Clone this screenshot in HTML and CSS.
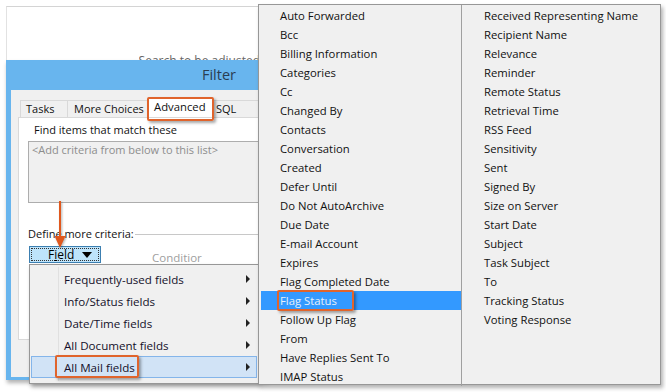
FILE: index.html
```html
<!DOCTYPE html>
<html>
<head>
<meta charset="utf-8">
<link rel="stylesheet" href="styles.css">
</head>
<body>
<div class="stage">
  <div class="bgwin"><div class="bgclip"><span class="bgtext">Search to be adjusted</span></div></div>
  <div class="dialog">
    <div class="titlebar"><span class="title">Filter</span></div>
    <div class="panel">
      <div class="tabs">
        <div class="tab tab-tasks">Tasks</div>
        <div class="tab tab-more">More Choices</div>
        <div class="tab tab-adv">Advanced</div>
        <div class="tab tab-sql">SQL</div>
      </div>
      <div class="content">
        <div class="find">Find items that match these</div>
        <div class="criteria">&lt;Add criteria from below to this list&gt;</div>
        <div class="define"><span>Define more criteria:</span><span class="rule"></span></div>
        <div class="fieldrow">
          <div class="fieldbtn"><span class="focus"><span class="flabel">F<u>i</u>eld</span><span class="tri"></span></span></div>
          <span class="cond">Conditior</span>
        </div>
      </div>
    </div>
  </div>

  <div class="menu">
    <div class="mi"><span>Frequently-used fields</span><span class="arr"></span></div>
    <div class="mi"><span>Info/Status fields</span><span class="arr"></span></div>
    <div class="mi"><span>Date/Time fields</span><span class="arr"></span></div>
    <div class="mi"><span>All Document fields</span><span class="arr"></span></div>
    <div class="mi mi-hl"><span>All Mail fields</span><span class="arr"></span></div>
  </div>

  <div class="submenu">
    <div class="col col1">
      <div class="si">Auto Forwarded</div>
      <div class="si">Bcc</div>
      <div class="si">Billing Information</div>
      <div class="si">Categories</div>
      <div class="si">Cc</div>
      <div class="si">Changed By</div>
      <div class="si">Contacts</div>
      <div class="si">Conversation</div>
      <div class="si">Created</div>
      <div class="si">Defer Until</div>
      <div class="si">Do Not AutoArchive</div>
      <div class="si">Due Date</div>
      <div class="si">E-mail Account</div>
      <div class="si">Expires</div>
      <div class="si">Flag Completed Date</div>
      <div class="si si-hl">Flag Status</div>
      <div class="si">Follow Up Flag</div>
      <div class="si">From</div>
      <div class="si">Have Replies Sent To</div>
      <div class="si">IMAP Status</div>
    </div>
    <div class="col col2">
      <div class="si">Received Representing Name</div>
      <div class="si">Recipient Name</div>
      <div class="si">Relevance</div>
      <div class="si">Reminder</div>
      <div class="si">Remote Status</div>
      <div class="si">Retrieval Time</div>
      <div class="si">RSS Feed</div>
      <div class="si">Sensitivity</div>
      <div class="si">Sent</div>
      <div class="si">Signed By</div>
      <div class="si">Size on Server</div>
      <div class="si">Start Date</div>
      <div class="si">Subject</div>
      <div class="si">Task Subject</div>
      <div class="si">To</div>
      <div class="si">Tracking Status</div>
      <div class="si">Voting Response</div>
    </div>
  </div>

  <div class="mark mark-adv"></div>
  <div class="mark mark-mail"></div>
  <div class="mark mark-flag"></div>

  <svg class="arrow" width="20" height="52" viewBox="0 0 20 52">
    <line x1="8" y1="1" x2="8" y2="38" stroke="#e0581e" stroke-width="2"/>
    <polygon points="2.5,36 13.5,36 8,48" fill="#e0581e"/>
  </svg>
</div>
</body>
</html>
```

FILE: styles.css
```css
* { box-sizing: border-box; }
html, body { margin: 0; padding: 0; background: #fff; }
body { font-family: "Open Sans", "Noto Sans", sans-serif; color: #000; }

.stage {
  position: relative;
  width: 666px;
  height: 392px;
  overflow: hidden;
  background: #fff;
  padding: 6px 0 0 6px;
}

.bgwin {
  width: 260px;
  height: 54px;
  background: #fff;
  border-top: 1px solid #d4d4d4;
  border-left: 1px solid #e2e2e2;
  display: flex;
  justify-content: flex-end;
  align-items: flex-end;
}
.bgclip {
  height: 5px;
  overflow: hidden;
  margin-right: 6px;
}
.bgtext {
  display: block;
  margin-top: 3px;
  font-size: 12px;
  line-height: 5px;
  color: #666;
  white-space: nowrap;
}

.dialog {
  width: 262px;
  height: 320px;
  background: #68b5ee;
  padding: 0 0 3px 5px;
  box-shadow: 1px 3px 4px rgba(0,0,0,0.3);
  display: flex;
  flex-direction: column;
}
.titlebar {
  height: 30px;
  display: flex;
  align-items: center;
  justify-content: flex-end;
  padding-right: 32px;
}
.title {
  font-size: 14.5px;
  line-height: 18px;
  color: #2a3d52;
}
.panel {
  flex: 1;
  background: #f0f0f0;
  padding: 10px 0 0 9px;
}

.tabs {
  display: flex;
  align-items: flex-end;
  height: 17px;
  font-size: 11px;
}
.tab {
  height: 17px;
  line-height: 16px;
  border: 1px solid #d9d9d9;
  border-bottom: none;
  background: #f0f0f0;
  padding-left: 5px;
  color: #111;
}
.tab + .tab { border-left: none; }
.tab-tasks { width: 48px; }
.tab-more { width: 80px; padding-left: 6px; }
.tab-adv {
  width: 65px;
  height: 20px;
  line-height: 17px;
  background: #fff;
  padding-left: 6px;
  border-left: 1px solid #d9d9d9;
  border-right: 1px solid #d9d9d9;
  font-size: 11.3px;
}
.tab-sql { width: 52px; padding-left: 3px; border-left: none; }

.content {
  margin-left: -2px;
  width: 260px;
  height: 223px;
  background: #fff;
  border: 1px solid #d9d9d9;
  padding: 4px 0 0 9px;
  font-size: 11px;
}
.find {
  line-height: 16px;
  padding-left: 6px;
  color: #111;
}
.criteria {
  margin-top: 3px;
  width: 250px;
  height: 62px;
  background: #f0f0f0;
  border: 1px solid #adadad;
  padding: 1px 3px;
  color: #8d8d8d;
  font-size: 11px;
  line-height: 14px;
}
.define {
  margin-top: 22px;
  display: flex;
  align-items: center;
  height: 16px;
  color: #111;
}
.rule {
  flex: 1;
  height: 1px;
  background: #c8c8c8;
  margin-left: 1px;
  margin-top: 2px;
}
.fieldrow {
  margin-top: 5px;
  display: flex;
  align-items: flex-start;
}
.fieldbtn {
  width: 72px;
  height: 17px;
  margin-left: 1px;
  background: #bee4fb;
  border: 1px solid #3c7fb1;
  padding: 1px;
}
.focus {
  display: flex;
  align-items: center;
  justify-content: space-between;
  width: 100%;
  height: 100%;
  border: 1px dotted #333;
  padding: 0 6px 0 16px;
  font-size: 12px;
  line-height: 12px;
}
.flabel u { text-decoration-thickness: 1px; }
.tri {
  width: 0;
  height: 0;
  border-left: 5px solid transparent;
  border-right: 5px solid transparent;
  border-top: 6px solid #000;
}
.cond {
  margin-left: 51px;
  margin-top: 5px;
  color: #a0a0a0;
  font-size: 11.5px;
  line-height: 14px;
}

/* dropdown menu */
.menu {
  position: absolute;
  left: 29px;
  top: 264px;
  width: 230px;
  height: 120px;
  background: #f0f0f0;
  border: 1px solid #979797;
  padding: 3px 1px;
  box-shadow: 2px 3px 4px rgba(0,0,0,0.35);
  font-size: 11.6px;
  color: #14102a;
  z-index: 2;
}
.menu::before {
  content: "";
  position: absolute;
  left: 28px;
  top: 2px;
  bottom: 2px;
  width: 1px;
  background: #e0e0e0;
}
.mi {
  height: 22px;
  display: flex;
  align-items: center;
  justify-content: space-between;
  padding: 0 6px 0 32px;
  border: 1px solid transparent;
}
.mi-hl {
  background: #d1e3f6;
  border-color: #84b5ea;
}
.arr {
  width: 0;
  height: 0;
  border-top: 4px solid transparent;
  border-bottom: 4px solid transparent;
  border-left: 4px solid #222;
}

/* submenu */
.submenu {
  position: absolute;
  left: 258px;
  top: 4px;
  width: 403px;
  height: 381px;
  background: #f0f0f0;
  border: 1px solid #979797;
  box-shadow: 2px 3px 4px rgba(0,0,0,0.3);
  display: grid;
  grid-template-columns: 202px 1fr;
  font-size: 11.3px;
  color: #111;
  z-index: 3;
}
.col { padding-top: 1px; }
.col1 { padding-left: 2px; }
.col2 { border-left: 1px solid #a0a0a0; padding-left: 0; }
.si {
  height: 19px;
  line-height: 19px;
  padding-left: 19px;
  white-space: nowrap;
}
.col2 .si { padding-left: 22px; }
.si-hl {
  background: #3399ff;
  color: #e8f0f8;
}

/* orange annotation boxes */
.mark {
  position: absolute;
  border: 2px solid #e0642c;
  border-radius: 2px;
  box-shadow: 2px 2px 3px rgba(0,0,0,0.35);
  z-index: 5;
}
.mark-adv { left: 147px; top: 97px; width: 67px; height: 24px; }
.mark-mail { left: 55px; top: 355px; width: 84px; height: 23px; }
.mark-flag { left: 277px; top: 290px; width: 77px; height: 21px; }

.arrow {
  position: absolute;
  left: 52px;
  top: 200px;
  z-index: 5;
  filter: drop-shadow(1px 1px 1px rgba(0,0,0,0.3));
}
```
